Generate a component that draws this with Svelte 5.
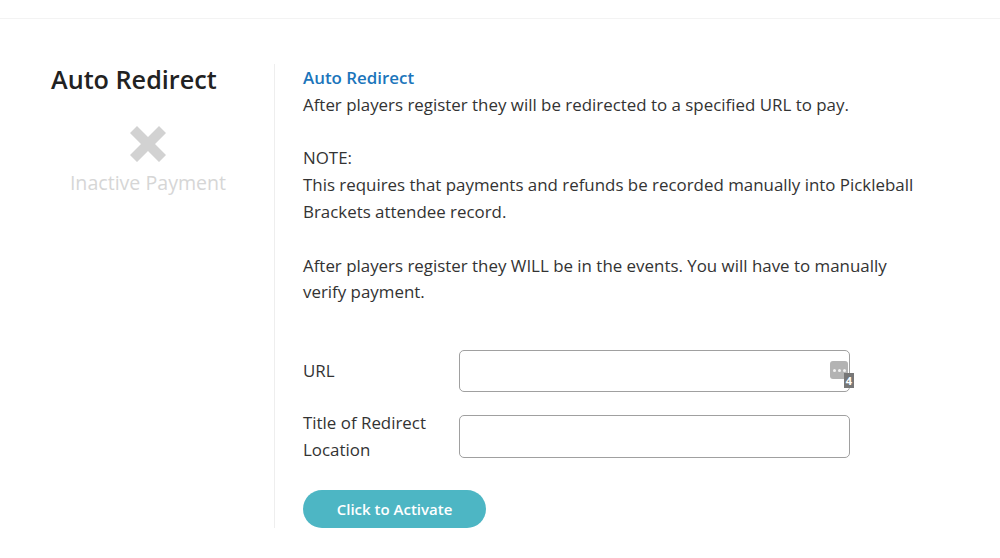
<script>
    let url = $state('');
    let title = $state('');
</script>

<div class="topbar"></div>

<div class="page">
    <aside class="side">
        <h2>Auto Redirect</h2>
        <div class="status">
            <svg class="cross" viewBox="0 0 36 36" width="36" height="36" aria-hidden="true">
                <path d="M7 0 L18 11 L29 0 L36 7 L25 18 L36 29 L29 36 L18 25 L7 36 L0 29 L11 18 L0 7 Z" fill="#d2d2d2" />
            </svg>
            <div class="status-label">Inactive Payment</div>
        </div>
    </aside>

    <main class="content">
        <div class="method">Auto Redirect</div>
        <p>After players register they will be redirected to a specified URL to pay.</p>
        <p class="gap">NOTE:<br />This requires that payments and refunds be recorded manually into Pickleball Brackets attendee record.</p>
        <p class="gap">After players register they WILL be in the events. You will have to manually verify payment.</p>

        <div class="form">
            <div class="row">
                <label for="url">URL</label>
                <div class="field">
                    <input id="url" class="url" type="text" bind:value={url} />
                    <span class="pm">
                        <span class="dots"><i></i><i></i><i></i></span>
                        <span class="count">4</span>
                    </span>
                </div>
            </div>
            <div class="row">
                <label for="title">Title of Redirect Location</label>
                <div class="field">
                    <input id="title" class="title" type="text" bind:value={title} />
                </div>
            </div>
        </div>

        <button class="activate" type="button">Click to Activate</button>
    </main>
</div>

<style>
    :global(body) {
        background: #fff;
        font-family: "Open Sans", "Noto Sans", sans-serif;
        color: #333;
    }

    .topbar {
        height: 18px;
        border-bottom: 1px solid #f3f3f3;
    }

    .page {
        display: flex;
        padding-top: 45px;
    }

    .side {
        width: 274px;
        flex: none;
        padding-left: 22px;
        box-sizing: border-box;
    }

    h2 {
        margin: 0;
        width: 250px;
        padding-left: 29px;
        box-sizing: border-box;
        font-size: 25.2px;
        font-weight: 600;
        line-height: 30px;
        color: #222;
    }

    .status {
        width: 252px;
        display: flex;
        flex-direction: column;
        align-items: center;
        padding-top: 32px;
    }

    .cross {
        display: block;
    }

    .status-label {
        margin-top: 8px;
        font-size: 19.6px;
        font-weight: 500;
        line-height: 26px;
        color: #d6d6d6;
    }

    .content {
        border-left: 1px solid #eee;
        padding-left: 28px;
        padding-top: 1px;
        width: 620px;
        height: 463px;
        font-size: 16.9px;
        line-height: 26.8px;
        color: #333;
    }

    .method {
        color: #1b75bb;
        font-weight: 600;
    }

    p {
        margin: 0;
    }

    .gap {
        margin-top: 26.8px;
    }

    .form {
        margin-top: 44px;
        display: flex;
        flex-direction: column;
        gap: 17px;
    }

    .row {
        display: flex;
        align-items: center;
    }

    label {
        width: 156px;
        flex: none;
        padding-top: 1px;
    }

    .field {
        position: relative;
        width: 391px;
    }

    input {
        display: block;
        width: 100%;
        box-sizing: border-box;
        border: 1px solid #a0a0a0;
        border-radius: 5px;
        background: #fff;
        outline: none;
    }

    input.url {
        height: 42px;
    }

    input.title {
        height: 43px;
    }

    .pm {
        position: absolute;
        top: 11px;
        right: 2px;
        width: 18px;
        height: 18px;
        background: #b3b3b3;
        border-radius: 3px;
    }

    .dots {
        display: flex;
        justify-content: center;
        align-items: center;
        gap: 2px;
        height: 100%;
    }

    .dots i {
        width: 3px;
        height: 3px;
        border-radius: 50%;
        background: #f2f2f2;
    }

    .count {
        position: absolute;
        left: 14px;
        top: 12px;
        width: 10px;
        height: 15px;
        background: #777;
        color: #fff;
        font-size: 11px;
        font-weight: 700;
        line-height: 15px;
        text-align: center;
    }

    .activate {
        display: block;
        margin-top: 26px;
        width: 183px;
        height: 38px;
        border: none;
        border-radius: 19px;
        background: #4db6c4;
        color: #fff;
        font-family: inherit;
        font-size: 15px;
        font-weight: 600;
    }
</style>
